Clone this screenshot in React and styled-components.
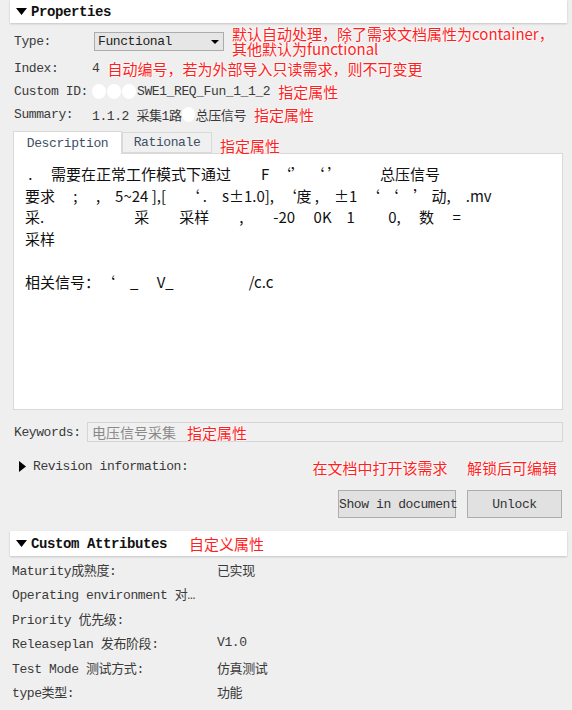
import React from "react";
import styled, { createGlobalStyle } from "styled-components";

const MONO = `"Liberation Mono", "Noto Sans CJK SC", monospace`;
const SANS = `"Noto Sans CJK SC", "Noto Sans", sans-serif`;

const GlobalStyle = createGlobalStyle`
  body {
    margin: 0;
    background: #efefef;
    font-family: ${MONO};
  }
`;

const attributes = [
  { name: "Maturity成熟度:", value: "已实现" },
  { name: "Operating environment 对…", value: "" },
  { name: "Priority 优先级:", value: "" },
  { name: "Releaseplan 发布阶段:", value: "V1.0" },
  { name: "Test Mode 测试方式:", value: "仿真测试" },
  { name: "type类型:", value: "功能" },
];

const description = [
  " .　 需要在正常工作模式下通过　　F  ‘’ ‘ ’　　　总压信号",
  "要求　 ;　 ,　5~24 ],[　 ‘ .　s±1.0],　‘度 ,　±1　‘ ‘　’ 动,　.mv",
  "采.　　　　　　采　　采样　　,　　-20　 0K　1　　 0,　 数　 =",
  "采样",
  "",
  "相关信号：　‘　_　 V_　　　　　/c.c",
];

function Triangle({ dir }) {
  return (
    <svg width="11" height="11" viewBox="0 0 11 11">
      {dir === "down" ? (
        <polygon points="0,2 11,2 5.5,9" fill="#000" />
      ) : (
        <polygon points="2,0 9,5.5 2,11" fill="#000" />
      )}
    </svg>
  );
}

export default function App() {
  return (
    <Page>
      <GlobalStyle />
      <SectionHeader>
        <Triangle dir="down" />
        <HeaderTitle>Properties</HeaderTitle>
      </SectionHeader>

      <Props>
        <Row tall>
          <Label>Type:</Label>
          <Select>
            <span>Functional</span>
            <Caret />
          </Select>
          <NoteBlock>
            <span>默认自动处理，除了需求文档属性为container，</span>
            <span>其他默认为functional</span>
          </NoteBlock>
        </Row>
        <Row>
          <Label>Index:</Label>
          <Value>4</Value>
          <Note>自动编号，若为外部导入只读需求，则不可变更</Note>
        </Row>
        <Row>
          <Label>Custom ID:</Label>
          <Value>
            <Blob w={14} />
            <Blob w={14} />
            <Blob w={14} />
            SWE1_REQ_Fun_1_1_2
          </Value>
          <Note>指定属性</Note>
        </Row>
        <Row>
          <Label>Summary:</Label>
          <Value>
            1.1.2 采集1路<Blob w={13} />总压信号
          </Value>
          <Note>指定属性</Note>
        </Row>
      </Props>

      <Tabs>
        <Tab active>Description</Tab>
        <Tab>Rationale</Tab>
        <Note>指定属性</Note>
      </Tabs>
      <Panel>
        {description.map((line, i) => (
          <DescLine key={i}>{line || " "}</DescLine>
        ))}
      </Panel>

      <KeywordRow>
        <KeyLabel>Keywords:</KeyLabel>
        <KeyInput>
          <Placeholder>电压信号采集</Placeholder>
          <Note>指定属性</Note>
        </KeyInput>
      </KeywordRow>

      <BottomRow>
        <Revision>
          <Triangle dir="right" />
          <span>Revision information:</span>
        </Revision>
        <Actions>
          <ActionCol w={118}>
            <Note small shift={34}>在文档中打开该需求</Note>
            <Button>Show in document</Button>
          </ActionCol>
          <ActionCol w={95}>
            <Note small shift={5}>解锁后可编辑</Note>
            <Button>Unlock</Button>
          </ActionCol>
        </Actions>
      </BottomRow>

      <SectionHeader tall>
        <Triangle dir="down" />
        <HeaderTitle>Custom Attributes</HeaderTitle>
        <Note>自定义属性</Note>
      </SectionHeader>

      <AttrList>
        {attributes.map((a) => (
          <AttrRow key={a.name}>
            <AttrName>{a.name}</AttrName>
            <AttrValue>{a.value}</AttrValue>
          </AttrRow>
        ))}
      </AttrList>
    </Page>
  );
}

const Page = styled.div`
  width: 557px;
  padding-left: 10px;
  color: #3a3a3a;
  font-family: ${MONO};
  font-size: 13px;
  letter-spacing: -0.4px;
`;

const SectionHeader = styled.div`
  display: flex;
  align-items: center;
  gap: 4px;
  height: ${(p) => (p.tall ? "25px" : "23px")};
  margin-top: ${(p) => (p.tall ? "13px" : "0")};
  padding-left: 6px;
  background: #fff;
  box-shadow: 0 1px 2px rgba(0, 0, 0, 0.18);
`;

const HeaderTitle = styled.span`
  font-weight: bold;
  font-size: 14px;
  color: #111;
  margin-right: 10px;
`;

const Props = styled.div`
  display: flex;
  flex-direction: column;
  padding-left: 4px;
  margin-top: 3px;
`;

const Row = styled.div`
  display: flex;
  align-items: center;
  height: ${(p) => (p.tall ? "31px" : "23px")};
`;

const Label = styled.span`
  width: 78px;
  flex-shrink: 0;
`;

const Value = styled.span`
  display: inline-flex;
  align-items: center;
  white-space: pre;
`;

const Blob = styled.span`
  display: inline-block;
  width: ${(p) => p.w}px;
  height: 15px;
  border-radius: 50%;
  background: #fff;
  margin-right: 1px;
`;

const Select = styled.div`
  display: flex;
  align-items: center;
  justify-content: space-between;
  width: 130px;
  height: 19px;
  box-sizing: border-box;
  margin-left: 2px;
  padding: 0 4px 0 3px;
  background: #e6e6e6;
  border: 1px solid #acacac;
  color: #222;
`;

const Caret = styled.span`
  width: 0;
  height: 0;
  border-left: 4px solid transparent;
  border-right: 4px solid transparent;
  border-top: 4px solid #000;
`;

const Note = styled.span`
  margin-left: ${(p) => (p.small ? "0" : "8px")};
  margin-right: ${(p) => (p.shift ? `${p.shift}px` : "0")};
  color: #ff1f1f;
  font-family: ${SANS};
  font-size: 15px;
  line-height: 15px;
  letter-spacing: 0;
  white-space: nowrap;
  text-shadow: 0 0 2px #fff, 0 0 2px #fff, 0 0 3px #fff;
`;

const NoteBlock = styled(Note)`
  display: flex;
  flex-direction: column;
  gap: 0;
  line-height: 14.5px;
`;

const Tabs = styled.div`
  display: flex;
  align-items: flex-end;
  margin-top: 5px;
  margin-left: 3px;
  height: 22px;
`;

const Tab = styled.div`
  display: flex;
  align-items: center;
  justify-content: center;
  box-sizing: border-box;
  width: ${(p) => (p.active ? "109px" : "90px")};
  height: ${(p) => (p.active ? "23px" : "21px")};
  margin-bottom: ${(p) => (p.active ? "-1px" : "0")};
  background: ${(p) => (p.active ? "#fff" : "#f0f0f0")};
  border: 1px solid #d9d9d9;
  border-bottom: ${(p) => (p.active ? "none" : "1px solid #d9d9d9")};
  color: #3d4f66;
  position: relative;
  z-index: 1;
`;

const Panel = styled.div`
  margin-left: 3px;
  width: 550px;
  height: 257px;
  box-sizing: border-box;
  padding: 9px 11px;
  background: #fff;
  border: 1px solid #d9d9d9;
`;

const DescLine = styled.div`
  font-family: ${SANS};
  font-size: 15px;
  line-height: 21.5px;
  letter-spacing: 0;
  color: #111;
  white-space: pre;
`;

const KeywordRow = styled.div`
  display: flex;
  align-items: center;
  margin-top: 12px;
  padding-left: 4px;
`;

const KeyLabel = styled.span`
  width: 73px;
`;

const KeyInput = styled.div`
  display: flex;
  align-items: center;
  width: 476px;
  height: 20px;
  box-sizing: border-box;
  padding-left: 4px;
  background: #f0f0f0;
  border: 1px solid #d5d5d5;
`;

const Placeholder = styled.span`
  font-family: ${SANS};
  font-size: 14px;
  letter-spacing: 0;
  color: #8a8a8a;
  margin-right: 3px;
`;

const BottomRow = styled.div`
  display: flex;
  justify-content: space-between;
  align-items: flex-start;
  margin-top: 16px;
`;

const Revision = styled.div`
  display: flex;
  align-items: center;
  gap: 5px;
  padding-left: 7px;
  height: 16px;
`;

const Actions = styled.div`
  display: flex;
  gap: 11px;
  margin-top: 2px;
  margin-right: 5px;
`;

const ActionCol = styled.div`
  display: flex;
  flex-direction: column;
  align-items: center;
  gap: 15px;
  width: ${(p) => p.w}px;
`;

const Button = styled.button`
  width: 100%;
  height: 28px;
  background: #e1e1e1;
  border: 1px solid #adadad;
  font-family: ${MONO};
  font-size: 13px;
  letter-spacing: -0.4px;
  white-space: nowrap;
  color: #333;
  padding: 0;
`;

const AttrList = styled.div`
  display: flex;
  flex-direction: column;
  padding-top: 1px;
`;

const AttrRow = styled.div`
  display: flex;
  align-items: center;
  height: 24.5px;
  padding-left: 2px;
`;

const AttrName = styled.span`
  width: 186px;
  margin-right: 19px;
  white-space: nowrap;
`;

const AttrValue = styled.span`
  white-space: nowrap;
`;
